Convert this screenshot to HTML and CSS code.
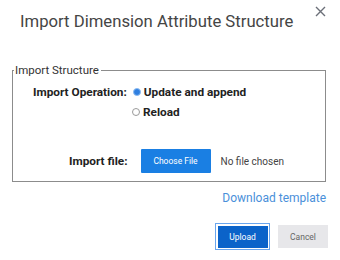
FILE: index.html
```html
<!DOCTYPE html>
<html>
<head>
<meta charset="utf-8">
<link rel="stylesheet" href="styles.css">
</head>
<body>
<div class="dialog">
  <div class="header">
    <h1 class="title">Import Dimension Attribute Structure</h1>
    <span class="close">
      <svg width="11" height="11" viewBox="0 0 11 11"><path d="M1 1 L10 10 M10 1 L1 10" stroke="#6b6f78" stroke-width="1.4" fill="none"/></svg>
    </span>
  </div>
  <fieldset class="box">
    <legend class="legend">Import Structure</legend>
    <div class="row op-row">
      <span class="label">Import Operation:</span>
      <label class="radio"><span class="dot on"></span>Update and append</label>
    </div>
    <div class="row reload-row">
      <label class="radio"><span class="dot"></span>Reload</label>
    </div>
    <div class="row file-row">
      <span class="label">Import file:</span>
      <span class="choose">Choose File</span>
      <span class="nofile">No file chosen</span>
    </div>
  </fieldset>
  <div class="links">
    <a class="download">Download template</a>
  </div>
  <div class="actions">
    <span class="btn upload"><span class="upload-inner">Upload</span></span>
    <span class="btn cancel">Cancel</span>
  </div>
</div>
</body>
</html>
```
FILE: styles.css
```css
html, body { margin: 0; padding: 0; background: #fff; }
body { font-family: Roboto, "Liberation Sans", sans-serif; color: #333; }
.dialog { width: 340px; height: 260px; position: relative; }
.header { display: flex; align-items: flex-start; padding: 12px 14px 0 20px; height: 49px; box-sizing: border-box; }
.title { margin: 0; font-size: 16.7px; font-weight: 400; color: #454545; line-height: 20px; flex: 1; white-space: nowrap; }
.close { margin-top: -6px; display: block; line-height: 0; }
.box { margin: 15px 0 0 12px; width: 314px; box-sizing: border-box; border: 1px solid #8c8c8c; border-radius: 0; padding: 0; height: 118px; }
.legend { font-size: 11.5px; padding: 0 2px 0 1px; margin-left: 1px; color: #333; line-height: 12px; }
.row { display: flex; align-items: center; }
.op-row { padding-left: 20px; margin-top: 7px; height: 18px; }
.reload-row { padding-left: 119px; margin-top: 2px; height: 18px; }
.file-row { padding-left: 56px; margin-top: 28px; height: 24px; }
.label { font-weight: 700; font-size: 11.8px; color: #222; }
.op-row .label { margin-right: 6px; }
.file-row .label { margin-right: 13px; }
.radio { display: flex; align-items: center; font-weight: 700; font-size: 11.8px; color: #222; }
.dot { width: 8px; height: 8px; border-radius: 50%; border: 1px solid #9a9a9a; margin-right: 3px; box-sizing: border-box; background: #fff; }
.dot.on { border: 1px solid #8dbcf2; background: #2f7fe0; }
.choose { background: #1a7fe3; color: #fff; font-size: 8.5px; height: 24px; width: 70px; display: flex; align-items: center; justify-content: center; border-radius: 1px; }
.nofile { font-size: 10px; color: #444; margin-left: 10px; }
.links { display: flex; justify-content: flex-end; padding-right: 14px; margin-top: 9px; }
.download { font-size: 12px; color: #4a90da; }
.actions { display: flex; justify-content: flex-end; gap: 8px; padding-right: 12px; margin-top: 18px; }
.btn { font-size: 8.5px; display: flex; align-items: center; justify-content: center; box-sizing: border-box; }
.upload { width: 55px; height: 27px; border: 1.5px solid #6aa6ee; padding: 1.5px; }
.upload-inner { background: #0b63c9; color: #fff; width: 100%; height: 100%; display: flex; align-items: center; justify-content: center; }
.cancel { width: 50px; height: 23px; background: #e7e7ea; color: #666; margin-top: 2px; }
```
